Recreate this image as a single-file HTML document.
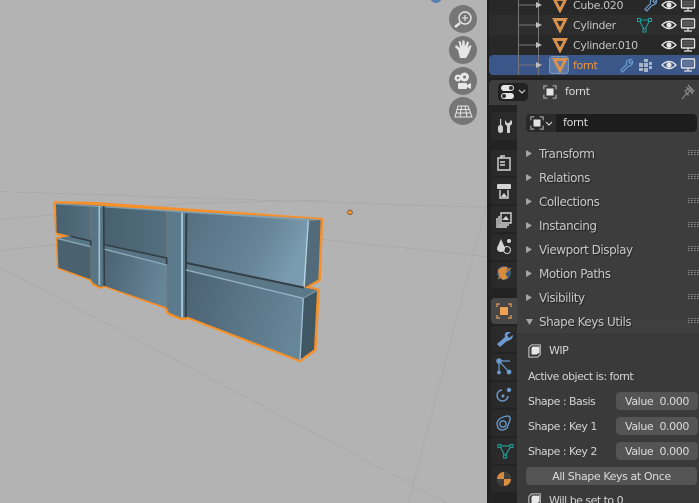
<!DOCTYPE html>
<html><head><meta charset="utf-8"><style>
html,body{margin:0;padding:0;background:#b3b3b3}
#r{position:relative;width:699px;height:503px;overflow:hidden;font-family:"DejaVu Sans",sans-serif;color:#d0d0d0}
#r div{position:absolute}
.t{white-space:nowrap;line-height:16px}
.h{font-size:12px;letter-spacing:-.47px;color:#c8c8c8;left:539px;text-shadow:1px 1px 1px #222}
.o{font-size:11px;letter-spacing:-.35px;left:573px;color:#c4c4c4}
.p{font-size:11px;letter-spacing:-.52px;color:#d4d4d4;left:528px}
.row{left:489px;width:210px;height:20px}
.tab{left:491px;width:26px;height:26px;border-radius:4px 0 0 4px;background:#2a2a2a}
.btn{left:616px;width:82px;height:18px;background:#545454;border-radius:4px;font-size:11px;letter-spacing:-.4px;line-height:18px;color:#dcdcdc;text-align:center;white-space:pre}
svg{position:absolute;left:0;top:0}
</style></head><body><div id="r">
<svg width="487" height="503" viewBox="0 0 487 503">
<rect width="487" height="503" fill="#b3b3b3"/>
<g transform="translate(0,170) scale(.33333)">
<defs>
<linearGradient id="a" x1="0" y1="0" x2="1" y2=".3"><stop offset="0" stop-color="#566f80"/><stop offset=".7" stop-color="#67869a"/><stop offset="1" stop-color="#7a9cb0"/></linearGradient>
<linearGradient id="b" x1="0" y1="0" x2="1" y2=".2"><stop offset="0" stop-color="#4b6272"/><stop offset="1" stop-color="#668597"/></linearGradient>
<linearGradient id="c" x1="0" y1="0" x2="1" y2="0"><stop offset="0" stop-color="#48606f"/><stop offset="1" stop-color="#546f80"/></linearGradient>
</defs>
<g fill="none" stroke="#a8a8a8" stroke-width="2.2">
<path d="M0 65L1461 112"/><path d="M0 148L560 100L1000 90"/><path d="M0 242L170 222"/><path d="M965 208L1461 260"/>
<path d="M0 292L1340 999"/><path d="M1461 100L1225 999"/>
</g>
<path d="M165 98L280 100L965 148L958 330L918 352L955 360L945 540L900 572L565 443L545 447L505 430L497 412L315 348L298 352L278 340L272 328L175 293L172 205L210 200L170 190Z" fill="#f6902a" stroke="#f6902a" stroke-width="9" stroke-linejoin="round"/>
<path d="M168 100L272 105L272 212L210 198L170 188Z" fill="url(#c)"/>
<path d="M172 205L272 230L272 328L175 293Z" fill="#4a626f"/>
<path d="M210 198L272 212L272 230L172 205Z" fill="#587586"/>
<path d="M272 105L315 108L315 348L298 350L278 338L272 328Z" fill="#587586"/>
<path d="M312 108L500 122L500 262L312 222Z" fill="url(#c)"/>
<path d="M312 238L500 285L500 412L315 348Z" fill="url(#b)"/>
<path d="M312 222L500 262L500 285L312 238Z" fill="#577384"/>
<path d="M500 122L560 128L558 440L545 444L507 428L500 412Z" fill="#5b7a8c"/>
<path d="M560 128L925 152L912 352L560 278Z" fill="url(#a)"/>
<path d="M558 300L910 385L900 570L565 441L558 440Z" fill="url(#b)"/>
<path d="M560 280L915 353L950 360L910 385L558 298Z" fill="#5b7889"/>
<path d="M925 152L962 150L955 328L915 352Z" fill="#516b7b"/>
<path d="M910 385L951 362L942 538L900 569Z" fill="#3f5663"/>
<path d="M168 100L962 148L925 152L168 103Z" fill="#7f9fb3"/>
<g fill="none">
<path d="M298 108L298 345" stroke="#9fc0d3" stroke-width="5"/>
<path d="M546 128L546 442" stroke="#9fc0d3" stroke-width="6"/>
<path d="M311 108L313 348" stroke="#333e46" stroke-width="5"/>
<path d="M559 130L557 442" stroke="#333e46" stroke-width="6"/>
<path d="M925 152L912 352" stroke="#b5d2e2" stroke-width="4"/>
<path d="M910 385L900 570" stroke="#9fc0d3" stroke-width="4"/>
<path d="M910 385L950 362" stroke="#7d9cae" stroke-width="3"/>
<path d="M560 279L912 353" stroke="#333e46" stroke-width="6"/>
<path d="M558 300L910 385" stroke="#93b3c6" stroke-width="4"/>
<path d="M314 224L500 264L500 283" stroke="#333e46" stroke-width="5"/>
<path d="M314 238L500 285" stroke="#8aaabc" stroke-width="4"/>
<path d="M212 199L272 213L272 229" stroke="#333e46" stroke-width="5"/>
<path d="M174 206L272 230" stroke="#86a6b8" stroke-width="4"/>
</g>
<circle cx="1050" cy="127" r="7" fill="#f6902a" stroke="#444" stroke-width="2"/>
</g>
<circle cx="436" cy="-3" r="6" fill="#5b7fb0"/>
<circle cx="463" cy="19" r="14" fill="#767676"/>
<circle cx="463" cy="50" r="14" fill="#767676"/>
<circle cx="463" cy="81" r="14" fill="#767676"/>
<circle cx="463" cy="111" r="14" fill="#767676"/>
<g fill="none" stroke="#e6e6e6">
<circle cx="465" cy="18" r="6" stroke-width="1.4"/><path d="M460 23L455 27" stroke-width="2.5"/><path d="M462 18H468M465 15V21" stroke-width="1.1"/>
<path d="M458 106H468L472 117H455ZM457 109.500H469.500M456 113H471M461.500 106L460 117M465 106L467 117" stroke-width="1"/>
</g>
<g fill="#e6e6e6">
<path d="M458 50L455 47L456 45L460 48L458.500 41.500L460.500 41L462 46.500L462.500 40.500H464.500L465 46.500L467 41.500L469 42L467.500 48L470 45L471.500 46L469 53L466 58H460Z"/>
<circle cx="458" cy="78" r="3.5"/><circle cx="464.500" cy="77" r="4.5"/><rect x="458" y="83" width="9" height="6" rx="1"/><path d="M467 85L471 83V89L467 87Z"/>
</g>
<circle cx="458" cy="78" r="1.2" fill="#767676"/><circle cx="464.500" cy="77" r="1.5" fill="#767676"/>
</svg>

<div style="left:487px;top:0;width:212px;height:503px;background:#1f1f1f"></div>
<div class="row" style="top:-5px;background:#282828"></div>
<div class="row" style="top:15px;background:#2d2d2d"></div>
<div class="row" style="top:35px;background:#282828"></div>
<div class="row" style="top:55px;background:#3b5689;border-radius:4px 0 0 4px"></div>
<div class="row" style="top:75px;height:3px;background:#262626"></div>
<div style="left:518px;top:0;width:1px;height:75px;background:#777"></div>
<div style="left:538px;top:0;width:1px;height:75px;background:#777"></div>

<svg width="699" height="80" viewBox="0 0 699 80">
<defs>
<symbol id="tri" viewBox="0 0 16 16"><path d="M2.500 2.500H13.500L8 13.500Z" fill="none" stroke="#d9914f" stroke-width="3"/></symbol>
<symbol id="eye" viewBox="0 0 16 16"><path d="M1 8Q8 1 15 8Q8 15 1 8Z" fill="none" stroke="#e4e4e4" stroke-width="1.3"/><circle cx="8" cy="8" r="2.6" fill="#e4e4e4"/></symbol>
<symbol id="mon" viewBox="0 0 16 16"><rect x="1.500" y="2" width="13" height="9" rx="1" fill="none" stroke="#e4e4e4" stroke-width="1.4"/><rect x="3" y="3.500" width="10" height="6" fill="#b8b8b8" opacity=".3"/><path d="M4 14H12M8 11V14" stroke="#e4e4e4" stroke-width="1.2"/></symbol>
<symbol id="wr" viewBox="0 0 16 16"><path d="M2 13L8 7Q7 3 10 2L13 1.500L10.500 4.500L12 6L14.500 3.500Q15 8 9.500 9L4 15Z" fill="none" stroke="#6b9bd0" stroke-width="1.2"/></symbol>
</defs>
<g fill="#bdbdbd"><path d="M536 2L542 5L536 8ZM536 22L542 25L536 28ZM536 42L542 45L536 48ZM536 62L542 65L536 68Z"/></g>
<g stroke="#777"><path d="M519 5H536M519 25H536M519 45H536M519 65H536"/></g>
<rect x="549.500" y="56.500" width="19" height="17" rx="3" fill="#5d7aa6" stroke="#7c95b9"/>
<use href="#tri" x="552" y="-3" width="16" height="16"/>
<use href="#tri" x="552" y="17" width="16" height="16"/>
<use href="#tri" x="552" y="37" width="16" height="16"/>
<use href="#tri" x="552" y="57" width="16" height="16"/>
<use href="#wr" x="643" y="-3" width="15" height="15"/>
<use href="#wr" x="619" y="58" width="15" height="15"/>
<path d="M639 20H650L644.500 30Z" fill="none" stroke="#1f9d94" stroke-width="1.1"/>
<path d="M637.500 18.500h3v3h-3zM648.500 18.500h3v3h-3zM643 29h3v3h-3z" fill="#282828" stroke="#1f9d94" stroke-width="1.1"/>
<g fill="#a9b4c7"><rect x="639" y="63" width="4" height="4"/><rect x="639" y="68" width="4" height="3"/><rect x="644" y="59" width="4" height="3"/><rect x="644" y="63" width="4" height="4"/><rect x="644" y="68" width="4" height="4"/><rect x="649" y="62" width="3" height="3"/><rect x="649" y="66" width="3" height="3"/></g>
<use href="#eye" x="661" y="-3" width="16" height="16"/><use href="#mon" x="680" y="-3" width="16" height="16"/>
<use href="#eye" x="661" y="17" width="16" height="16"/><use href="#mon" x="680" y="17" width="16" height="16"/>
<use href="#eye" x="661" y="37" width="16" height="16"/><use href="#mon" x="680" y="37" width="16" height="16"/>
<use href="#eye" x="661" y="57" width="16" height="16"/><use href="#mon" x="680" y="57" width="16" height="16"/>
</svg>

<div class="t o" style="top:-2px">Cube.020</div>
<div class="t o" style="top:18px">Cylinder</div>
<div class="t o" style="top:38px">Cylinder.010</div>
<div class="t o" style="top:58px;color:#f0953a">fornt</div>

<div style="left:489px;top:80px;width:210px;height:423px;background:#3d3d3d;border-radius:4px 0 0 0"></div>
<div style="left:489px;top:105px;width:28px;height:398px;background:#232323"></div>
<div style="left:517px;top:333px;width:182px;height:170px;background:#3a3a3a"></div>
<div style="left:517px;top:320px;width:182px;height:13px;background:#3f3f3f"></div>

<div style="left:498px;top:83px;width:30px;height:18px;border-radius:4px;background:#222"></div>
<div class="tab" style="top:112px;height:28px"></div>
<div class="tab" style="top:150px"></div><div class="tab" style="top:178px"></div><div class="tab" style="top:206px"></div><div class="tab" style="top:234px"></div><div class="tab" style="top:262px"></div>
<div class="tab" style="top:298px;background:#474747"></div>
<div class="tab" style="top:326px"></div><div class="tab" style="top:354px"></div><div class="tab" style="top:382px"></div><div class="tab" style="top:410px"></div><div class="tab" style="top:438px"></div><div class="tab" style="top:466px"></div>

<div style="left:526px;top:114px;width:171px;height:18px;background:#1d1d1d;border-radius:4px"></div>
<div style="left:526px;top:114px;width:30px;height:18px;background:#2a2a2a;border-radius:4px 0 0 4px"></div>

<div class="t" style="left:565px;top:84px;font-size:11px;letter-spacing:-.3px;color:#d8d8d8">fornt</div>
<div class="t" style="left:563px;top:115px;font-size:11px;letter-spacing:-.3px;color:#d8d8d8">fornt</div>

<div class="t h" style="top:146px">Transform</div>
<div class="t h" style="top:170px">Relations</div>
<div class="t h" style="top:194px">Collections</div>
<div class="t h" style="top:218px">Instancing</div>
<div class="t h" style="top:242px">Viewport Display</div>
<div class="t h" style="top:266px">Motion Paths</div>
<div class="t h" style="top:290px">Visibility</div>
<div class="t h" style="top:314px">Shape Keys Utils</div>

<div class="t p" style="left:549px;top:343px">WIP</div>
<div class="t p" style="top:369px">Active object is: fornt</div>
<div class="t p" style="top:394px">Shape : Basis</div>
<div class="t p" style="top:419px">Shape : Key 1</div>
<div class="t p" style="top:444px">Shape : Key 2</div>
<div class="btn" style="top:392px;line-height:19px">Value  0.000</div>
<div class="btn" style="top:417px;line-height:19px">Value  0.000</div>
<div class="btn" style="top:442px;line-height:19px">Value  0.000</div>
<div class="btn" style="left:526px;width:171px;top:467px;line-height:19px">All Shape Keys at Once</div>
<div class="t p" style="left:549px;top:493px">Will be set to 0</div>

<svg width="699" height="503" viewBox="0 0 699 503">
<defs>
<symbol id="obj" viewBox="0 0 16 16"><path d="M1 5V1H5M11 1H15V5M15 11V15H11M5 15H1V11" fill="none" stroke="currentColor" stroke-width="1.2"/><rect x="4" y="4" width="8" height="8" fill="#e4e4e4"/></symbol>
<symbol id="cube" viewBox="0 0 16 16"><path d="M4 1H14V12L11 15H1V4Z" fill="none" stroke="#c8c8c8" stroke-width="1.2"/><path d="M5 3H13V10L10 12H4V5Z" fill="#e8e8e8"/></symbol>
</defs>
<rect x="501" y="85" width="13" height="6" rx="3" fill="#e4e4e4"/><rect x="501" y="93" width="13" height="6" rx="3" fill="#e4e4e4"/><circle cx="511" cy="88" r="2" fill="#333"/><circle cx="504" cy="96" r="2" fill="#333"/>
<g fill="none" stroke="#d0d0d0" stroke-width="1.2"><path d="M519 90L522 93L525 90"/><path d="M546 122L549 125L552 122"/></g>
<use href="#obj" x="543" y="85" width="14" height="14" color="#b8b8b8"/>
<use href="#obj" x="530" y="116" width="14" height="14" color="#b8b8b8"/>
<path d="M682 99L687 93M686 87L693 94M688 85L694 91L692 92L691 89L688 93L688 95L685 91L687 90L690 88Z" stroke="#8a8a8a" stroke-width="1.1" fill="none"/>

<g fill="#cfcfcf"><rect x="498" y="125" width="5" height="8" rx="2.500"/><rect x="500" y="119" width="1.200" height="7"/><path d="M505 120L507 123H509L511 120L512 121V124L510 126V133H507V126L505 124Z"/></g>
<g fill="none" stroke="#d4d4d4" stroke-width="1.400">
<path d="M498 158H510V170H498ZM501 158V156H505"/><path d="M500 162H505M500 165H505"/>
<path d="M500 190V198H508V190"/>
<path d="M501 213H511V223H501ZM499 216V225H509M497 218V227H507"/>
<circle cx="507" cy="250" r="3.500" stroke-width="1"/>
</g>
<g fill="#d4d4d4"><rect x="497" y="184" width="14" height="5" rx="1"/><path d="M501 197L504 193L507 197Z"/><path d="M506 216L509 220H502Z"/><path d="M501 239L505 248Q505 252 501 252Q497 252 497 248Z"/><circle cx="509" cy="241" r="2"/></g>
<circle cx="504" cy="273" r="7" fill="#3b5a78"/><path d="M498 270Q503 265 508 268L505 273L508 278L503 280L499 276Z" fill="#d98c3e"/>
<path d="M498 279L511 268" stroke="#d98c3e" fill="none"/>
<g transform="translate(496,303)"><path d="M1 4V1H4M12 1H15V4M15 12V15H12M4 15H1V12" fill="none" stroke="#f0a050" stroke-width="1.200"/><rect x="4" y="4" width="8" height="8" fill="#f0a050"/></g>
<path d="M497 344L505 337Q504 333 507 332L511 332L507 335L509 338L513 335Q513 340 507 341L500 347Z" fill="#6b9bd0"/>
<g stroke="#6b9bd0" stroke-width="1.200" fill="#6b9bd0"><path d="M499 361V372M499 361L509 372M499 361H510" fill="none"/><circle cx="499" cy="361" r="2.200"/><circle cx="499" cy="372.500" r="1.300"/><circle cx="509" cy="372" r="1.800"/></g>
<path d="M508 396A5.500 5.500 0 1 1 502 390" fill="none" stroke="#6b9bd0" stroke-width="1.400"/><circle cx="503" cy="396" r="1.500" fill="#6b9bd0"/><circle cx="509" cy="390" r="2.200" fill="#6b9bd0"/>
<g fill="none" stroke="#6b9bd0" stroke-width="1.300"><path d="M497 424Q497 418 507 416Q511 416 510 420L507 428Q502 432 498 428Z"/><circle cx="503" cy="424" r="3.200"/></g>
<g fill="none" stroke="#1f9d94" stroke-width="1.200"><path d="M500 446H511L505 456Z"/></g>
<g fill="#2a2a2a" stroke="#1f9d94" stroke-width="1.100"><rect x="498" y="444.500" width="3" height="3"/><rect x="510" y="444.500" width="3" height="3"/><rect x="503.500" y="455" width="3" height="3"/></g>
<circle cx="504" cy="479" r="7" fill="#d98c3e"/><path d="M504 472A7 7 0 0 1 511 479H504ZM504 479H497A7 7 0 0 0 504 486Z" fill="#3f3f3f"/>

<g fill="#a5a5a5"><path d="M526 150L532 153.500L526 157ZM526 174L532 177.500L526 181ZM526 198L532 201.500L526 205ZM526 222L532 225.500L526 229ZM526 246L532 249.500L526 253ZM526 270L532 273.500L526 277ZM526 294L532 297.500L526 301ZM526 319H533L529.500 325Z"/></g>
<g stroke="#8a8a8a" stroke-width="1.100" stroke-dasharray="1.500 1.500" fill="none">
<path d="M688 150.500H699M688 152.500H699M688 154.500H699"/>
<path d="M688 174.500H699M688 176.500H699M688 178.500H699"/>
<path d="M688 198.500H699M688 200.500H699M688 202.500H699"/>
<path d="M688 222.500H699M688 224.500H699M688 226.500H699"/>
<path d="M688 246.500H699M688 248.500H699M688 250.500H699"/>
<path d="M688 270.500H699M688 272.500H699M688 274.500H699"/>
<path d="M688 294.500H699M688 296.500H699M688 298.500H699"/>
<path d="M688 318.500H699M688 320.500H699M688 322.500H699"/>
</g>
<use href="#cube" x="528" y="344" width="14" height="14"/>
<use href="#cube" x="528" y="493" width="14" height="14"/>
</svg>
</div></body></html>
